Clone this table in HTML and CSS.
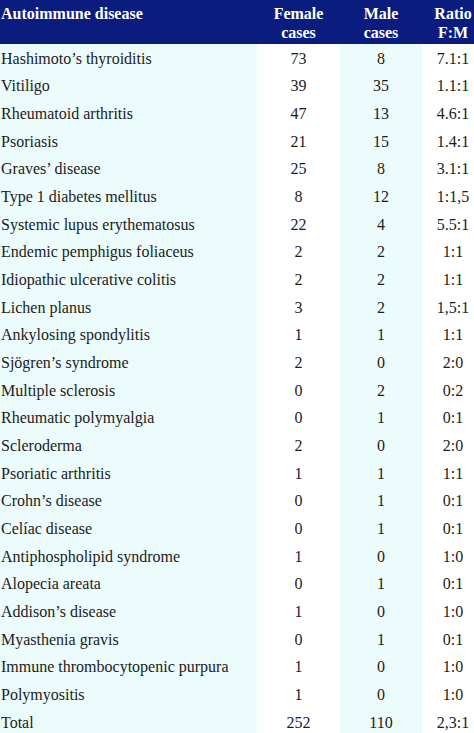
FILE: index.html
```html
<!DOCTYPE html>
<html>
<head>
<meta charset="utf-8">
<link rel="stylesheet" href="styles.css">
</head>
<body>
<table class="tbl">
  <colgroup>
    <col class="c1"><col class="c2"><col class="c3"><col class="c4">
  </colgroup>
  <thead>
    <tr>
      <th class="name">Autoimmune disease</th>
      <th>Female<br>cases</th>
      <th>Male<br>cases</th>
      <th>Ratio<br>F:M</th>
    </tr>
  </thead>
  <tbody>
    <tr><td>Hashimoto’s thyroiditis</td><td>73</td><td>8</td><td>7.1:1</td></tr>
    <tr><td>Vitiligo</td><td>39</td><td>35</td><td>1.1:1</td></tr>
    <tr><td>Rheumatoid arthritis</td><td>47</td><td>13</td><td>4.6:1</td></tr>
    <tr><td>Psoriasis</td><td>21</td><td>15</td><td>1.4:1</td></tr>
    <tr><td>Graves’ disease</td><td>25</td><td>8</td><td>3.1:1</td></tr>
    <tr><td>Type 1 diabetes mellitus</td><td>8</td><td>12</td><td>1:1,5</td></tr>
    <tr><td>Systemic lupus erythematosus</td><td>22</td><td>4</td><td>5.5:1</td></tr>
    <tr><td>Endemic pemphigus foliaceus</td><td>2</td><td>2</td><td>1:1</td></tr>
    <tr><td>Idiopathic ulcerative colitis</td><td>2</td><td>2</td><td>1:1</td></tr>
    <tr><td>Lichen planus</td><td>3</td><td>2</td><td>1,5:1</td></tr>
    <tr><td>Ankylosing spondylitis</td><td>1</td><td>1</td><td>1:1</td></tr>
    <tr><td>Sjögren’s syndrome</td><td>2</td><td>0</td><td>2:0</td></tr>
    <tr><td>Multiple sclerosis</td><td>0</td><td>2</td><td>0:2</td></tr>
    <tr><td>Rheumatic polymyalgia</td><td>0</td><td>1</td><td>0:1</td></tr>
    <tr><td>Scleroderma</td><td>2</td><td>0</td><td>2:0</td></tr>
    <tr><td>Psoriatic arthritis</td><td>1</td><td>1</td><td>1:1</td></tr>
    <tr><td>Crohn’s disease</td><td>0</td><td>1</td><td>0:1</td></tr>
    <tr><td>Celíac disease</td><td>0</td><td>1</td><td>0:1</td></tr>
    <tr><td>Antiphospholipid syndrome</td><td>1</td><td>0</td><td>1:0</td></tr>
    <tr><td>Alopecia areata</td><td>0</td><td>1</td><td>0:1</td></tr>
    <tr><td>Addison’s disease</td><td>1</td><td>0</td><td>1:0</td></tr>
    <tr><td>Myasthenia gravis</td><td>0</td><td>1</td><td>0:1</td></tr>
    <tr><td>Immune thrombocytopenic purpura</td><td>1</td><td>0</td><td>1:0</td></tr>
    <tr><td>Polymyositis</td><td>1</td><td>0</td><td>1:0</td></tr>
    <tr><td>Total</td><td>252</td><td>110</td><td>2,3:1</td></tr>
  </tbody>
</table>
</body>
</html>
```
FILE: styles.css
```css
html, body {
  margin: 0;
  padding: 0;
  background: #ffffff;
  overflow: hidden;
}
body {
  width: 474px;
  height: 733px;
}
.tbl {
  border-collapse: collapse;
  table-layout: fixed;
  width: 484px;
  font-family: "Liberation Serif", "Times New Roman", serif;
  font-size: 16px;
  color: #1c1c1c;
}
.c1 { width: 257px; }
.c2 { width: 83px; }
.c3 { width: 82px; }
.c4 { width: 62px; }
.tbl thead tr {
  height: 44px;
}
.tbl th {
  background: #0a1c7e;
  color: #ffffff;
  font-weight: bold;
  padding: 4px 0 0 0;
  text-align: center;
  vertical-align: top;
  line-height: 19px;
}
.tbl th.name {
  text-align: left;
  padding-left: 1px;
}
.tbl tbody tr {
  height: 27.67px;
}
.tbl td {
  padding: 2px 0 0 0;
  text-align: center;
  vertical-align: middle;
  line-height: 18px;
  white-space: nowrap;
}
.tbl td:first-child {
  text-align: left;
  padding-left: 1px;
}
.tbl td:nth-child(1),
.tbl td:nth-child(3) {
  background: #ecfbfb;
}
.tbl td:nth-child(2),
.tbl td:nth-child(4) {
  background: #ffffff;
}
```
